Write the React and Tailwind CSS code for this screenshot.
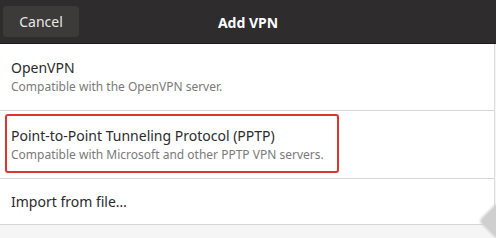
import React from "react";

const rows = [
  { title: "OpenVPN", sub: "Compatible with the OpenVPN server.", h: "h-[67px]" },
  {
    title: "Point-to-Point Tunneling Protocol (PPTP)",
    sub: "Compatible with Microsoft and other PPTP VPN servers.",
    h: "h-[68px]",
    marked: true,
  },
  { title: "Import from file…", h: "h-[46px]" },
];

export default function App() {
  return (
    <div
      className="relative h-[238px] w-[496px] overflow-hidden bg-[#f5f5f5]"
      style={{ fontFamily: '"Noto Sans", "Open Sans", sans-serif' }}
    >
      {/* header bar */}
      <div className="relative flex h-11 items-center border-b border-[#1c1a1a] bg-[#2e2c2c] px-[3px]">
        <button className="h-[31px] w-[76px] rounded-[4px] bg-[#3d3a3a] text-[14px] text-[#e8e8e8]">
          Cancel
        </button>
        <div className="absolute inset-x-0 top-0 flex h-11 items-center justify-center pointer-events-none">
          <span className="text-[14px] font-bold text-white">Add VPN</span>
        </div>
      </div>

      {/* list */}
      <div className="w-[495px] border-r border-[#dcdcdc] bg-white">
        {rows.map(row => (
          <div
            key={row.title}
            className={`relative flex flex-col justify-center border-b border-[#d6d6d6] pl-[11px] ${row.h}`}
          >
            <div className="text-[14px] leading-[20px] text-[#2b2b2b]">{row.title}</div>
            {row.sub && (
              <div className="text-[12px] leading-[18px] text-[#7a7a7a]">{row.sub}</div>
            )}
            {row.marked && (
              <div className="absolute left-[5px] top-[3px] h-[59px] w-[334px] rounded-[3px] border-2 border-[#e0342e]" />
            )}
          </div>
        ))}
      </div>

      {/* watermark blob */}
      <div className="absolute right-[-14px] bottom-[4px] h-[26px] w-[26px] rotate-45 rounded-[4px] bg-[#cfcfcf] blur-[1px]" />
    </div>
  );
}
